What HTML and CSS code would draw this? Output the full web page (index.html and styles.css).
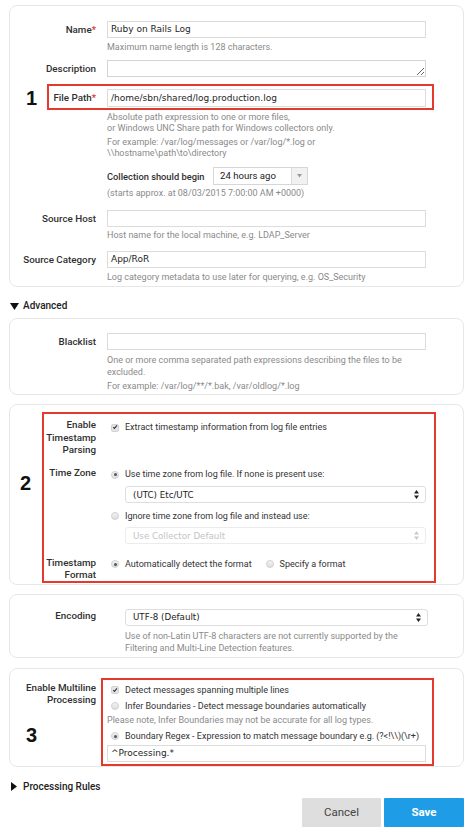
FILE: index.html
```html
<!DOCTYPE html>
<html lang="en">
<head>
<meta charset="utf-8">
<title>Log source settings</title>
<link rel="stylesheet" href="styles.css">
</head>
<body>
<div class="page">

  <section class="card card-main">
    <div class="row">
      <label class="lbl">Name<span class="req">*</span></label>
      <div class="ctl">
        <div class="field">Ruby on Rails Log</div>
        <p class="help help-name">Maximum name length is 128 characters.</p>
      </div>
    </div>
    <div class="row row-desc">
      <label class="lbl">Description</label>
      <div class="ctl">
        <textarea class="area"></textarea>
      </div>
    </div>
    <div class="row row-path">
      <span class="mark mark-path"></span>
      <span class="num num-1">1</span>
      <label class="lbl lbl-path">File Path<span class="req">*</span></label>
      <div class="ctl">
        <div class="field field-path">/home/sbn/shared/log.production.log</div>
        <p class="help help-path">Absolute path expression to one or more files,<br>or Windows UNC Share path for Windows collectors only.</p>
        <p class="help help-ex">For example: /var/log/messages or /var/log/*.log or<br>\\hostname\path\to\directory</p>
        <div class="collect">
          <span class="collect-lbl">Collection should begin</span>
          <div class="drop">
            <span class="drop-val">24 hours ago</span>
            <span class="drop-btn"><svg width="5" height="4" viewBox="0 0 5 4"><path d="M0 0h5L2.5 3.5z" fill="#9a9a9a"/></svg></span>
          </div>
        </div>
        <p class="help help-start">(starts approx. at 08/03/2015 7:00:00 AM +0000)</p>
      </div>
    </div>
    <div class="row row-host">
      <label class="lbl">Source Host</label>
      <div class="ctl">
        <div class="field"></div>
        <p class="help help-host">Host name for the local machine, e.g. LDAP_Server</p>
      </div>
    </div>
    <div class="row row-cat">
      <label class="lbl">Source Category</label>
      <div class="ctl">
        <div class="field">App/RoR</div>
        <p class="help help-cat">Log category metadata to use later for querying, e.g. OS_Security</p>
      </div>
    </div>
  </section>

  <div class="toggle toggle-adv">
    <svg class="tri-down" width="9" height="7" viewBox="0 0 9 7"><path d="M0 0h9L4.5 7z" fill="#111"/></svg>
    <span>Advanced</span>
  </div>

  <section class="card card-black">
    <div class="row">
      <label class="lbl">Blacklist</label>
      <div class="ctl">
        <div class="field"></div>
        <p class="help help-bl">One or more comma separated path expressions describing the files to be<br>excluded.</p>
        <p class="help help-bl2">For example: /var/log/**/*.bak, /var/oldlog/*.log</p>
      </div>
    </div>
  </section>

  <section class="card card-ts">
    <span class="mark mark-ts"></span>
    <span class="num num-2">2</span>
    <div class="row">
      <label class="lbl lbl-multi">Enable<br>Timestamp<br>Parsing</label>
      <div class="ctl">
        <div class="opt opt-check"><span class="cb"><svg width="8" height="8" viewBox="0 0 8 8"><path d="M1.6 4.2l1.7 1.7L6.6 1.8" stroke="#333" stroke-width="1.4" fill="none"/></svg></span>Extract timestamp information from log file entries</div>
      </div>
    </div>
    <div class="row row-tz">
      <label class="lbl lbl-multi">Time Zone</label>
      <div class="ctl">
        <div class="opt"><span class="rb on"></span>Use time zone from log file. If none is present use:</div>
        <div class="sel sel-tz"><span>(UTC) Etc/UTC</span><svg class="updown" width="5" height="9" viewBox="0 0 5 9"><path d="M0 3.6L2.5 0 5 3.6zM0 5.4h5L2.5 9z" fill="#222"/></svg></div>
        <div class="opt opt-ignore"><span class="rb"></span>Ignore time zone from log file and instead use:</div>
        <div class="sel sel-tz sel-off"><span>Use Collector Default</span><svg class="updown" width="5" height="9" viewBox="0 0 5 9"><path d="M0 3.6L2.5 0 5 3.6zM0 5.4h5L2.5 9z" fill="#c9c9c9"/></svg></div>
      </div>
    </div>
    <div class="row row-fmt">
      <label class="lbl lbl-multi">Timestamp<br>Format</label>
      <div class="ctl">
        <div class="opt opt-fmt"><span class="rb on"></span>Automatically detect the format<span class="rb rb-second"></span>Specify a format</div>
      </div>
    </div>
  </section>

  <section class="card card-enc">
    <div class="row">
      <label class="lbl lbl-enc">Encoding</label>
      <div class="ctl ctl-enc">
        <div class="sel sel-enc"><span>UTF-8 (Default)</span><svg class="updown" width="5" height="9" viewBox="0 0 5 9"><path d="M0 3.6L2.5 0 5 3.6zM0 5.4h5L2.5 9z" fill="#222"/></svg></div>
        <p class="help help-enc">Use of non-Latin UTF-8 characters are not currently supported by the<br>Filtering and Multi-Line Detection features.</p>
      </div>
    </div>
  </section>

  <section class="card card-ml">
    <span class="mark mark-ml"></span>
    <span class="num num-3">3</span>
    <div class="row">
      <label class="lbl lbl-ml">Enable Multiline<br>Processing</label>
      <div class="ctl">
        <div class="opt opt-ml"><span class="cb"><svg width="8" height="8" viewBox="0 0 8 8"><path d="M1.6 4.2l1.7 1.7L6.6 1.8" stroke="#333" stroke-width="1.4" fill="none"/></svg></span>Detect messages spanning multiple lines</div>
        <div class="opt opt-ml"><span class="rb"></span>Infer Boundaries - Detect message boundaries automatically</div>
        <p class="help help-note">Please note, Infer Boundaries may not be accurate for all log types.</p>
        <div class="opt opt-ml opt-regex"><span class="rb on"></span>Boundary Regex - Expression to match message boundary e.g. (?&lt;!\\)(\r+)</div>
        <div class="field field-regex">^Processing.*</div>
      </div>
    </div>
  </section>

  <div class="toggle toggle-rules">
    <svg class="tri-right" width="6" height="9" viewBox="0 0 6 9"><path d="M0 0v9L6 4.5z" fill="#111"/></svg>
    <span>Processing Rules</span>
  </div>

  <div class="actions">
    <button class="btn btn-cancel" type="button">Cancel</button>
    <button class="btn btn-save" type="button">Save</button>
  </div>

</div>
</body>
</html>
```

FILE: styles.css
```css
html, body {
  margin: 0;
  padding: 0;
  background: #ffffff;
}

body {
  font-family: Roboto, "Liberation Sans", sans-serif;
  color: #333;
}

.page {
  padding: 5px 10px 0 9px;
}

p {
  margin: 0;
}

.card {
  position: relative;
  border: 1px solid #e7e7e7;
  border-radius: 8px;
  background: #fff;
  padding: 0 37px 0 0;
}

.row {
  position: relative;
  display: grid;
  grid-template-columns: 86px 1fr;
  column-gap: 11px;
  align-items: start;
}

.lbl {
  display: block;
  text-align: right;
  font-size: 9.8px;
  font-weight: 500;
  line-height: 17px;
  color: #2f2f2f;
  white-space: nowrap;
}

.req {
  color: #e0322a;
}

.ctl {
  min-width: 0;
}

.field {
  box-sizing: border-box;
  height: 17px;
  border: 1px solid #dcdcdc;
  background: #fff;
  font-family: "DejaVu Sans", sans-serif;
  font-size: 9px;
  line-height: 15px;
  padding: 0 3px;
  color: #1e1e1e;
  white-space: nowrap;
}

.area {
  display: block;
  box-sizing: border-box;
  width: 100%;
  height: 17px;
  margin: 0;
  padding: 0;
  border: 1px solid #d4d4d4;
  resize: vertical;
  font-family: "DejaVu Sans", sans-serif;
  font-size: 9px;
  overflow: hidden;
}

.help {
  font-size: 9px;
  line-height: 11px;
  color: #8a8a8a;
  white-space: nowrap;
}

/* card 1 */
.card-main {
  padding-top: 15px;
  padding-bottom: 3px;
}

.help-name { margin-top: 4px; }
.row-desc { margin-top: 7px; }
.row-path { margin-top: 12px; }
.field-path { height: 18px; line-height: 16px; }
.help-path { margin-top: 5px; }
.help-ex { margin-top: 3px; }

.collect {
  margin-top: 8px;
  display: flex;
  align-items: center;
  height: 18px;
}

.collect-lbl {
  font-size: 9.3px;
  font-weight: 500;
  color: #2f2f2f;
  width: 106px;
  flex: none;
  white-space: nowrap;
}

.drop {
  box-sizing: border-box;
  display: flex;
  width: 95px;
  height: 18px;
  border: 1px solid #d6d6d6;
  background: #fff;
}

.drop-val {
  flex: 1;
  font-size: 9.6px;
  line-height: 16px;
  padding-left: 6px;
  color: #222;
}

.drop-btn {
  width: 15px;
  border-left: 1px solid #dcdcdc;
  background: #f1f1f1;
  display: flex;
  align-items: center;
  justify-content: center;
}

.help-start { margin-top: 3px; }
.row-host { margin-top: 11px; }
.help-host { margin-top: 3px; }
.row-cat { margin-top: 10px; }
.help-cat { margin-top: 4px; }

/* toggles */
.toggle {
  display: flex;
  align-items: center;
  font-size: 10px;
  font-weight: 500;
  line-height: 14px;
  color: #222;
}

.toggle-adv {
  margin-top: 12px;
}

.tri-down {
  margin-left: 1px;
  margin-right: 4px;
}

.toggle-rules {
  margin-top: 13px;
}

.tri-right {
  margin-left: 2px;
  margin-right: 6px;
}

/* card 2 */
.card-black {
  margin-top: 5px;
  padding-top: 14px;
  padding-bottom: 2px;
}

.help-bl { margin-top: 4px; line-height: 12px; }
.help-bl2 { margin-top: 2px; line-height: 12px; }

/* annotations */
.mark {
  position: absolute;
  box-sizing: border-box;
  border: 2px solid #e5392c;
  pointer-events: none;
}

.mark-path {
  left: 37px;
  top: -5px;
  width: 387px;
  height: 26px;
}

.mark-ts {
  left: 32px;
  top: 7px;
  width: 394px;
  height: 171px;
}

.mark-ml {
  left: 91px;
  top: 9px;
  width: 333px;
  height: 88px;
}

.num {
  position: absolute;
  font-family: "Liberation Sans", Arial, sans-serif;
  font-weight: 700;
  font-size: 20px;
  line-height: 20px;
  color: #111;
}

.num-1 { left: 16px; top: -1px; }
.num-2 { left: 10px; top: 68px; }
.num-3 { left: 16px; top: 56px; }

/* card 3 */
.card-ts {
  margin-top: 9px;
  padding-top: 14px;
  padding-bottom: 2px;
}

.lbl-multi {
  line-height: 12.5px;
}

.opt {
  display: flex;
  align-items: center;
  font-size: 9px;
  line-height: 15px;
  color: #333;
  white-space: nowrap;
}

.opt-check {
  line-height: 17px;
}

.cb {
  box-sizing: border-box;
  width: 8px;
  height: 8px;
  margin: 0 6px 0 4px;
  border-radius: 2px;
  background: #e4e4e4;
  border: 1px solid #d3d3d3;
  display: flex;
  align-items: center;
  justify-content: center;
  flex: none;
}

.cb svg {
  margin-top: -1px;
}

.rb {
  box-sizing: border-box;
  width: 8px;
  height: 8px;
  margin: 0 6px 0 4px;
  border-radius: 50%;
  background: linear-gradient(#f3f3f3, #dedede);
  border: 1px solid #d0d0d0;
  flex: none;
  position: relative;
}

.rb.on::after {
  content: "";
  position: absolute;
  left: 1.5px;
  top: 1.5px;
  width: 3px;
  height: 3px;
  border-radius: 50%;
  background: #555;
}

.rb-second {
  margin-left: 14px;
}

.row-tz {
  margin-top: 10.5px;
}

.sel {
  box-sizing: border-box;
  display: flex;
  align-items: center;
  justify-content: space-between;
  height: 17px;
  border: 1px solid #dedede;
  border-radius: 3px;
  background: #fff;
  padding: 0 6px 0 7px;
  font-family: "DejaVu Sans", sans-serif;
  font-size: 8.7px;
  color: #222;
}

.sel-tz {
  margin-left: 18px;
  margin-top: 4px;
}

.opt-ignore {
  margin-top: 5.5px;
}

.sel-off {
  margin-top: 3.5px;
  color: #c4c4c4;
  border-color: #ececec;
}

.row-fmt {
  margin-top: 12.75px;
}

/* card 4 */
.card-enc {
  margin-top: 9px;
  padding-top: 14px;
  padding-bottom: 3px;
}

.lbl-enc {
  line-height: 14px;
}

.ctl-enc {
  padding-left: 18px;
  margin-right: -2px;
}

.help-enc {
  margin-top: 4px;
  line-height: 12px;
}

/* card 5 */
.card-ml {
  margin-top: 10px;
  padding-top: 13.5px;
  padding-bottom: 4px;
}

.lbl-ml {
  line-height: 12px;
}

.opt-ml {
  line-height: 16px;
}

.help-note {
  line-height: 12px;
}

.opt-regex {
  margin-top: 2px;
}

.field-regex {
  margin-top: 0.5px;
}

/* buttons */
.actions {
  margin-top: 4px;
  display: flex;
  justify-content: flex-end;
  gap: 3px;
}

.btn {
  width: 80px;
  height: 29px;
  border: none;
  border-radius: 1px;
  font-family: Roboto, "Liberation Sans", sans-serif;
  font-size: 11.5px;
  cursor: pointer;
}

.btn-cancel {
  width: 79px;
  background: #dedede;
  color: #444;
}

.btn-save {
  background: #1f9ce6;
  color: #fff;
  font-weight: 700;
}
```
